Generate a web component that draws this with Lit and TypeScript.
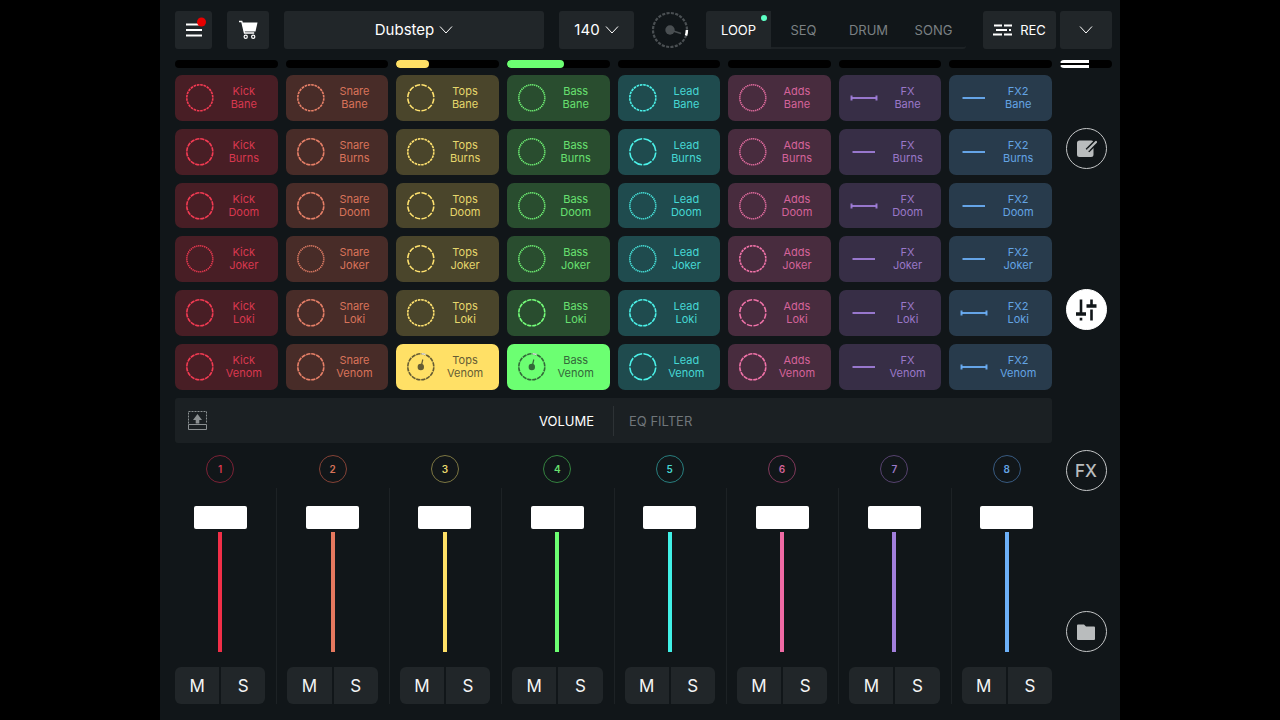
import { LitElement, html, svg, css, nothing } from "lit";
import { customElement, property, state } from "lit/decorators.js";
import { classMap } from "lit/directives/class-map.js";
import { styleMap } from "lit/directives/style-map.js";

interface Track {
  name: string;
  color: string;
  ink: string;
  tint: string;
  ring: string;
  level: number;
  /** Segments per ring for each pack; 0 is a one-shot line, -1 a held line. */
  segments: number[];
}

const PACKS = ["Bane", "Burns", "Doom", "Joker", "Loki", "Venom"];

const TRACKS: Track[] = [
  { name: "Kick", color: "#f22f48", ink: "#d8384f", tint: "#481e25", ring: "#7c2236", level: 0, segments: [24, 16, 16, 40, 16, 16] },
  { name: "Snare", color: "#e5785e", ink: "#d8735a", tint: "#482c28", ring: "#844236", level: 0, segments: [24, 16, 16, 40, 16, 16] },
  { name: "Tops", color: "#ffe066", ink: "#e6d76c", tint: "#4a452b", ring: "#7c7642", level: 32, segments: [12, 24, 12, 12, 24, 16] },
  { name: "Bass", color: "#6cff72", ink: "#68e070", tint: "#294d2f", ring: "#34823f", level: 56, segments: [40, 40, 40, 40, 16, 16] },
  { name: "Lead", color: "#40f0e6", ink: "#46d8d4", tint: "#1f4b4e", ring: "#287e7e", level: 0, segments: [24, 8, 40, 40, 16, 8] },
  { name: "Adds", color: "#f06aa4", ink: "#d4639a", tint: "#482c3e", ring: "#7f3859", level: 0, segments: [40, 40, 40, 24, 12, 16] },
  { name: "FX", color: "#a27fdc", ink: "#9a78c8", tint: "#372e46", ring: "#56426f", level: 0, segments: [-1, 0, -1, 0, 0, 0] },
  { name: "FX2", color: "#6cb0f8", ink: "#64a4e4", tint: "#283b4c", ring: "#385a80", level: 0, segments: [0, 0, 0, 0, -1, -1] },
];

const chevron = html`<svg class="chevron" width="14" height="10" viewBox="0 0 14 10" aria-hidden="true">
  <path d="M1 1.500 7 8l6-6.500" fill="none" stroke="currentColor" stroke-width="1" />
</svg>`;

const reset = css`
  * {
    box-sizing: border-box;
  }
  button,
  select,
  input {
    margin: 0;
    padding: 0;
    border: 0;
    background: none;
    color: inherit;
    font: inherit;
    cursor: pointer;
  }
  svg {
    display: block;
    flex: none;
  }
`;

@customElement("loop-pad")
class LoopPad extends LitElement {
  @property() track = "";
  @property() pack = "";
  @property({ type: Number }) segments = 16;
  @property({ type: Boolean }) active = false;

  static styles = [
    reset,
    css`
      :host {
        display: grid;
        min-width: 0;
      }
      .pad {
        display: flex;
        align-items: center;
        width: 100%;
        padding: 0 4px 0 11px;
        border-radius: 7px;
        background: var(--tint);
        color: var(--ink);
      }
      .pad.active {
        background: var(--color);
        color: color-mix(in srgb, var(--tint) 85%, var(--color));
      }
      .name {
        flex: 1;
        font-size: 11px;
        line-height: 13px;
        text-align: center;
      }
      .name span {
        display: block;
      }
      .line {
        stroke: var(--color);
        stroke-width: 2;
        opacity: 0.9;
      }
      .ring {
        fill: none;
        stroke: color-mix(in srgb, var(--color) 94%, white);
        stroke-width: 1.600;
      }
      .active .ring {
        stroke: currentColor;
      }
    `,
  ];

  private icon() {
    if (this.segments <= 0) {
      return this.segments === 0
        ? svg`<path class="line" d="M2.500 14H25" />`
        : svg`<path class="line" d="M1 14H27" /><path class="line" d="M1.500 11.500v5M26.500 11.500v5" stroke-width="1" />`;
    }
    const n = this.segments;
    const gap = n >= 40 ? 40 : n >= 24 ? 23 : n >= 16 ? 16 : n >= 12 ? 21 : 13;
    return svg`
      <circle class="ring" cx="13.800" cy="13.800" r="13" pathLength=${n * 100}
        stroke-dasharray="${100 - gap} ${gap}" stroke-dashoffset=${-gap / 2}
        transform="rotate(-90 13.8 13.8)" />
      ${
        this.active
          ? svg`<circle cx="13.800" cy="14" r="3.200" fill="currentColor" />
              <path d="M14 14 15.800 6.500" stroke="currentColor" stroke-width="1.200" />
              <path d="M14.500 .8a13 13 0 0 1 4 .8" fill="none" stroke="#fff" stroke-opacity=".8" stroke-width="1.600" />`
          : nothing
      }`;
  }

  render() {
    return html`<button class=${classMap({ pad: true, active: this.active })} aria-pressed=${this.active}>
      <svg width="28" height="28" viewBox="0 0 28 28" overflow="visible" aria-hidden="true">${this.icon()}</svg>
      <span class="name"><span>${this.track}</span><span>${this.pack}</span></span>
    </button>`;
  }
}

@customElement("channel-strip")
class ChannelStrip extends LitElement {
  @property({ type: Number }) number = 1;
  @state() private volume = 100;

  static styles = [
    reset,
    css`
      :host {
        display: flex;
        flex-direction: column;
        align-items: center;
        position: relative;
        min-width: 0;
      }
      :host(:not(:last-child))::after {
        content: "";
        position: absolute;
        top: 33px;
        bottom: 0;
        right: -12px;
        width: 1px;
        background: #1d2225;
      }
      .badge {
        display: grid;
        place-items: center;
        width: 28px;
        height: 28px;
        border: 1px solid var(--ring);
        border-radius: 50%;
        color: var(--ink);
        font-size: 10px;
        font-weight: 600;
      }
      .fader {
        appearance: none;
        writing-mode: vertical-lr;
        direction: rtl;
        width: 53px;
        height: 146px;
        margin: 23px 0 15px;
      }
      .fader::-webkit-slider-runnable-track {
        width: 53px;
        height: 146px;
        background: linear-gradient(var(--color), var(--color)) center bottom / 4px calc(var(--volume) * 120px) no-repeat;
        border-radius: 2px;
      }
      .fader::-webkit-slider-thumb {
        appearance: none;
        width: 53px;
        height: 23px;
        border-radius: 2px;
        background: #fff;
      }
      .switches {
        display: grid;
        grid-template-columns: 1fr 1fr;
        gap: 2px;
        width: 100%;
        height: 37px;
        border-radius: 6px;
        overflow: hidden;
      }
      .switch {
        background: #212629;
        color: #f4f5f5;
        font-size: 17px;
      }
    `,
  ];

  render() {
    return html`
      <label class="badge" for="fader">${this.number}</label>
      <input id="fader" class="fader" type="range" min="0" max="100" .value=${String(this.volume)}
        style=${styleMap({ "--volume": String(this.volume / 100) })}
        @input=${(e: Event) => (this.volume = Number((e.target as HTMLInputElement).value))} />
      <div class="switches">
        <button class="switch" aria-label="Mute">M</button>
        <button class="switch" aria-label="Solo">S</button>
      </div>
    `;
  }
}

@customElement("app-root")
class AppRoot extends LitElement {
  @state() private mode = "LOOP";
  private modes = ["LOOP", "SEQ", "DRUM", "SONG"];

  static styles = [
    reset,
    css`
      :host {
        display: flex;
        justify-content: center;
        min-height: 100vh;
        background: #000;
        color: #fff;
        font-family: Inter, Roboto, "Liberation Sans", sans-serif;
      }
      .app {
        display: flex;
        flex-direction: column;
        gap: 11px;
        width: 100%;
        max-width: 133.3334vh;
        padding: 11px 8px 0 15px;
        background: #111619;
      }
      .header {
        display: flex;
        height: 38px;
      }
      .tile {
        display: flex;
        align-items: center;
        justify-content: center;
        flex: none;
        background: #212629;
        border-radius: 3px;
      }
      .menu {
        width: 37px;
        margin-right: 15px;
      }
      .shop {
        width: 42px;
        margin-right: 15px;
      }
      .preset {
        flex: 1;
        gap: 5px;
        margin-right: 15px;
      }
      .tempo {
        gap: 5px;
        width: 75px;
      }
      .choice {
        appearance: none;
        field-sizing: content;
        font-size: 15px;
        line-height: 20px;
      }
      .dial {
        display: grid;
        place-items: center;
        width: 72px;
      }
      .modes {
        display: grid;
        grid-template-columns: repeat(4, 1fr);
        flex: 1;
        margin-right: 17px;
        border-bottom: 2px solid #1d2225;
        border-radius: 3px;
      }
      .mode {
        position: relative;
        height: 38px;
        color: #7b8083;
        font-size: 13px;
      }
      .mode.on {
        background: #212629;
        color: #fff;
        border-radius: 3px 0 0 3px;
      }
      .mode.on::after {
        content: "";
        position: absolute;
        top: 4px;
        right: 4px;
        width: 6px;
        height: 6px;
        border-radius: 50%;
        background: #5cffc4;
      }
      .rec {
        gap: 7px;
        width: 73px;
        margin-right: 4px;
        font-size: 13px;
      }
      .more {
        width: 52px;
      }
      .body {
        display: grid;
        grid-template-columns: minmax(0, 1fr) 52px;
        gap: 8px;
        flex: 1;
      }
      .deck {
        display: flex;
        flex-direction: column;
      }
      .meters,
      .pads {
        display: grid;
        grid-template-columns: repeat(8, minmax(0, 1fr));
        gap: 8px;
      }
      .meters {
        margin-bottom: 7px;
      }
      .meter {
        height: 8px;
        border-radius: 4px;
        background: #000;
        overflow: hidden;
      }
      .fill {
        height: 100%;
        border-radius: 4px;
        background: var(--color);
      }
      .pads {
        grid-auto-rows: 1fr;
        flex: 1;
      }
      .switcher {
        display: grid;
        grid-template-columns: 1fr 1px 1fr;
        align-items: center;
        height: 45px;
        margin-top: 8px;
        background: #1b2023;
        border-radius: 3px;
        font-size: 13px;
      }
      .half {
        display: flex;
        align-items: center;
        justify-content: space-between;
        padding: 0 19px 0 12px;
      }
      .half.end {
        padding: 0 15px;
        color: #70767a;
      }
      .rule {
        height: 30px;
        background: #2d3235;
      }
      .mixer {
        display: grid;
        grid-template-columns: repeat(8, minmax(0, 1fr));
        gap: 22px;
        padding: 12px 0 16px;
      }
      .side {
        display: flex;
        flex-direction: column;
        padding-bottom: 8px;
      }
      .stereo {
        display: grid;
        gap: 2px;
      }
      .stereo .fill {
        --color: #fff;
        height: 3px;
        border-radius: 2px 0 0 2px;
      }
      .tools {
        display: flex;
        flex-direction: column;
        align-items: center;
        justify-content: space-around;
        flex: 1;
      }
      .tool {
        display: grid;
        place-items: center;
        width: 41px;
        height: 41px;
        border: 1px solid #c4c6c7;
        border-radius: 50%;
        color: #b9bcbd;
        font-size: 17px;
        font-weight: 500;
      }
      .tool.on {
        background: #fff;
        border-color: #fff;
        color: #111619;
      }
    `,
  ];

  private header() {
    return html`<header class="header">
      <button class="tile menu" aria-label="Menu">
        <svg width="28" height="28" viewBox="0 0 28 28">
          <path d="M6 8.500h16M6 14h16M6 19.500h16" stroke="#fff" stroke-width="2.200" />
          <circle cx="21.500" cy="6" r="4.500" fill="#e80000" />
        </svg>
      </button>
      <button class="tile shop" aria-label="Shop">
        <svg width="20" height="20" viewBox="0 0 20 20">
          <path d="M1 1.500h2.800L6.500 13h9.700" fill="none" stroke="#fff" stroke-width="1.300" />
          <path d="M4 2.500h15.500L17.500 11.500H6z" fill="#fff" />
          <g fill="none" stroke="#fff" stroke-width="1.200">
            <circle cx="7.700" cy="16.800" r="1.600" /><circle cx="15.200" cy="16.800" r="1.600" />
          </g>
        </svg>
      </button>
      <label class="tile preset">
        <select class="choice" aria-label="Preset"><option>Dubstep</option></select>${chevron}
      </label>
      <label class="tile tempo">
        <select class="choice" aria-label="Tempo"><option>140</option></select>${chevron}
      </label>
      <div class="dial">
        <svg width="38" height="38" viewBox="0 0 38 38" aria-hidden="true">
          <circle cx="19" cy="19" r="17" fill="none" stroke="#4a4f52" stroke-width="2.200" pathLength="240"
            stroke-dasharray="7 3" transform="rotate(3 19 19)" />
          <path d="M35.900 19a17 17 0 0 1-.9 5.500" fill="none" stroke="#fff" stroke-width="2.500" />
          <circle cx="19" cy="19" r="4.700" fill="#4a4f52" />
          <path d="M19 19 30 22.500" stroke="#4a4f52" stroke-width="1.800" />
        </svg>
      </div>
      <nav class="modes">
        ${this.modes.map(
          (m) => html`<button class=${classMap({ mode: true, on: m === this.mode })} @click=${() => (this.mode = m)}>${m}</button>`,
        )}
      </nav>
      <button class="tile rec">
        <svg width="20" height="12" viewBox="0 0 20 12" aria-hidden="true">
          <path d="M1 1.500h8M11 1.500h8M3 6h11M16 6h2M0 10.500h9M11 10.500h8" stroke="#fff" stroke-width="2" />
        </svg>
        REC
      </button>
      <button class="tile more" aria-label="More">${chevron}</button>
    </header>`;
  }

  private vars(t: Track) {
    return styleMap({ "--color": t.color, "--ink": t.ink, "--tint": t.tint, "--ring": t.ring });
  }

  private side() {
    return html`<aside class="side">
      <div class="meter stereo">
        <div class="fill" style=${styleMap({ width: "56%" })}></div>
        <div class="fill" style=${styleMap({ width: "56%" })}></div>
      </div>
      <div class="tools">
        <button class="tool" aria-label="Edit">
          <svg width="22" height="20" viewBox="0 0 22 20">
            <path d="M4.500 1.500h12a2 2 0 0 1 2 2v12a2.500 2.500 0 0 1-2.500 2.500H4.500a2.500 2.500 0 0 1-2.500-2.500V4a2.500 2.500 0 0 1 2.500-2.500z" fill="currentColor" />
            <path d="M21.500 2.500 12.500 11.500" stroke="#111619" stroke-width="5.200" />
            <path d="M21 3 13.800 10.300" stroke="currentColor" stroke-width="2.200" stroke-linecap="round" />
            <path d="M12.800 9.300 11 13 14.800 11.300z" fill="currentColor" />
          </svg>
        </button>
        <button class="tool on" aria-label="Mixer">
          <svg width="22" height="24" viewBox="0 0 22 24">
            <path d="M6 1.500v15M6 19.700v2.800M16.500 1.500v6M16.500 11.500v11" stroke="currentColor" stroke-width="2.600" />
            <path d="M1 16h10M11.500 8h10" stroke="currentColor" stroke-width="3.600" />
          </svg>
        </button>
        <button class="tool">FX</button>
        <button class="tool" aria-label="Files">
          <svg width="20" height="18" viewBox="0 0 20 18">
            <path d="M1 2.500A1 1 0 0 1 2 1.500h6l2 2h8a1 1 0 0 1 1 1V16a1 1 0 0 1-1 1H2a1 1 0 0 1-1-1z" fill="currentColor" />
          </svg>
        </button>
      </div>
    </aside>`;
  }

  render() {
    return html`<main class="app">
      ${this.header()}
      <div class="body">
        <div class="deck">
          <div class="meters">
            ${TRACKS.map(
              (t) => html`<div class="meter" style=${this.vars(t)}>
                <div class="fill" style=${styleMap({ width: `${t.level}%` })}></div>
              </div>`,
            )}
          </div>
          <section class="pads">
            ${PACKS.map((pack, row) =>
              TRACKS.map(
                (t) => html`<loop-pad style=${this.vars(t)} .track=${t.name} .pack=${pack}
                  .segments=${t.segments[row]} .active=${row === 5 && t.level > 0}></loop-pad>`,
              ),
            )}
          </section>
          <div class="switcher">
            <div class="half">
              <button aria-label="Expand">
                <svg width="21" height="21" viewBox="0 0 21 21" fill="none" stroke="#8b9092">
                  <path d="M1.500 13.500V1.500h18v12" stroke-dasharray="2 1" />
                  <path d="M1.500 14.500h18v5h-18z" />
                  <path d="M10.500 4 15 10h-2.700v3.500H8.700V10H6z" fill="#8b9092" stroke="none" />
                </svg>
              </button>
              <button>VOLUME</button>
            </div>
            <div class="rule"></div>
            <div class="half end"><button>EQ FILTER</button></div>
          </div>
          <section class="mixer">
            ${TRACKS.map((t, i) => html`<channel-strip style=${this.vars(t)} .number=${i + 1}></channel-strip>`)}
          </section>
        </div>
        ${this.side()}
      </div>
    </main>`;
  }
}
